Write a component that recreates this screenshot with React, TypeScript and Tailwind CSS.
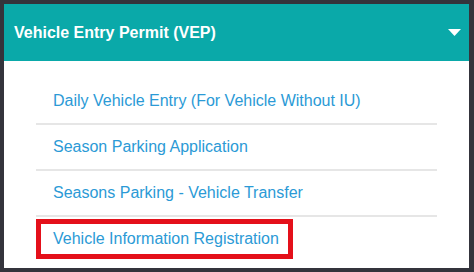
const items = [
  "Daily Vehicle Entry (For Vehicle Without IU)",
  "Season Parking Application",
  "Seasons Parking - Vehicle Transfer",
];

export default function App() {
  return (
    <div className="w-[474px] h-[272px] bg-[#34343c] pt-[4px] pl-[4px] pr-[5px] pb-[4px] font-['Liberation_Sans',Arial,sans-serif]">
      <div className="flex flex-col h-full bg-white">
        {/* Header */}
        <div className="h-[57px] bg-[#0aa9a9] flex items-center justify-between pl-[10px] pr-[8px]">
          <span className="text-white font-bold text-[16px]">
            Vehicle Entry Permit (VEP)
          </span>
          <svg width="13" height="7" viewBox="0 0 13 7">
            <path d="M0 0 H13 L6.5 7 Z" fill="white" />
          </svg>
        </div>
        {/* Links */}
        <div className="flex flex-col px-[32px] pt-[18px]">
          {items.map((t) => (
            <div
              key={t}
              className="h-[46px] flex items-center pl-[17px] border-b-2 border-[#e6e6e6] text-[#2b9ad6] text-[16px]"
            >
              {t}
            </div>
          ))}
          <div className="pt-[2px]">
            <span className="inline-flex items-center h-[40px] w-[257px] border-[5px] border-[#e4101a] pl-[12px] text-[#2b9ad6] text-[16px]">
              Vehicle Information Registration
            </span>
          </div>
        </div>
      </div>
    </div>
  );
}
